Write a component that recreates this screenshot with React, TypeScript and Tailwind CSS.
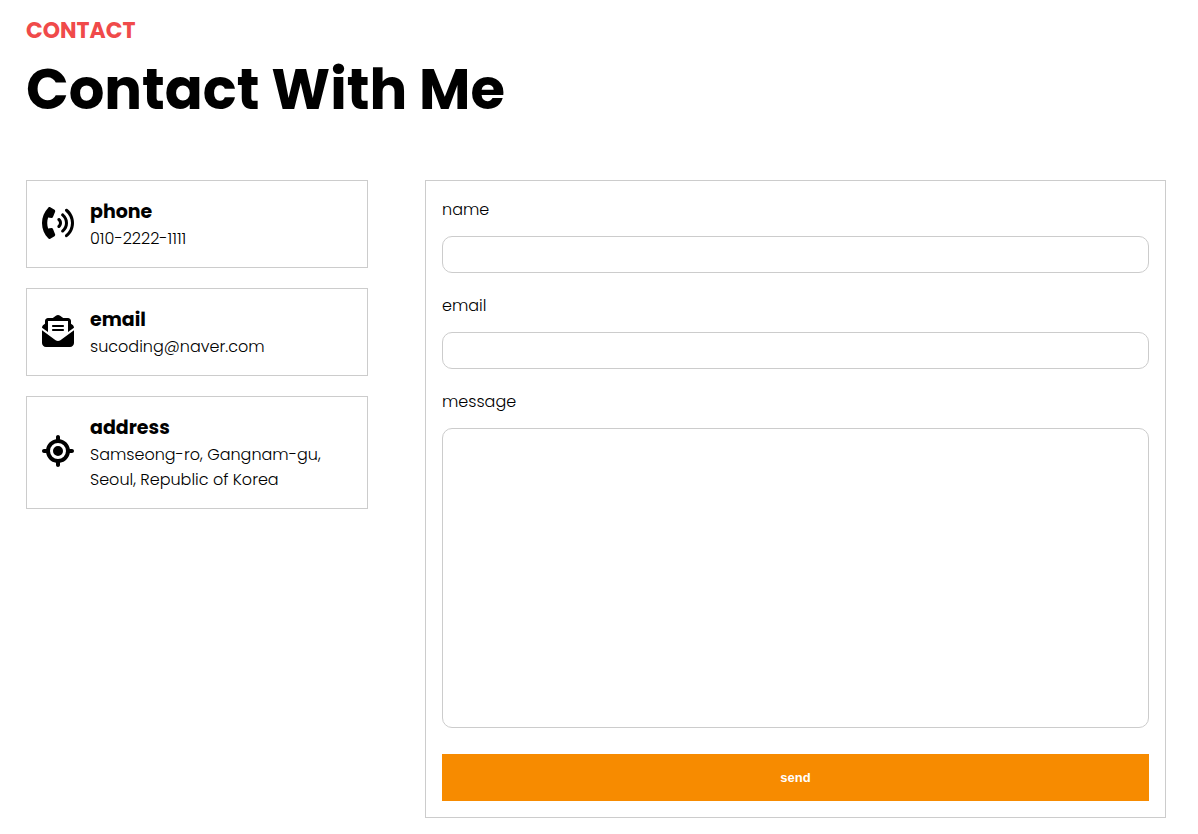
import type { ReactNode } from 'react';
import { FaEnvelopeOpenText, FaLocationCrosshairs } from 'react-icons/fa6';

type CardProps = { icon: ReactNode; title: string; lines: string[] };

function PhoneIcon() {
  return (
    <svg width="32" height="32" viewBox="0 0 512 512" fill="currentColor" aria-hidden="true">
      <path d="M284.6 181.9c-10.28-8.344-25.41-6.875-33.75 3.406C242.4 195.6 243.9 210.7 254.2 219.1c11.31 9.25 17.81 22.69 17.81 36.87c0 14.19-6.5 27.62-17.81 36.87c-10.28 8.406-11.78 23.53-3.375 33.78c4.719 5.812 11.62 8.812 18.56 8.812c5.344 0 10.75-1.781 15.19-5.406c22.53-18.44 35.44-45.4 35.44-74.05S307.1 200.4 284.6 181.9z" />
      <path d="M345.1 107.1c-10.22-8.344-25.34-6.907-33.78 3.343c-8.406 10.25-6.906 25.37 3.344 33.78c33.88 27.78 53.31 68.18 53.31 110.9s-19.44 83.09-53.31 110.9c-10.25 8.406-11.75 23.53-3.344 33.78c4.75 5.781 11.62 8.781 18.56 8.781c5.375 0 10.75-1.781 15.22-5.438C390.2 367.1 416 313.1 416 255.1S390.2 144.9 345.1 107.1z" />
      <path d="M406.4 33.15c-10.22-8.344-25.34-6.875-33.78 3.344c-8.406 10.25-6.906 25.37 3.344 33.78C431.9 116.1 464 183.8 464 255.1s-32.09 139.9-88.06 185.7c-10.25 8.406-11.75 23.53-3.344 33.78c4.75 5.781 11.62 8.781 18.56 8.781c5.375 0 10.75-1.781 15.22-5.438C473.5 423.8 512 342.6 512 255.1S473.5 88.15 406.4 33.15z" />
      <path d="M151.3 174.6C161.1 175.6 172.1 169.5 176 159.6l33.75-84.38C214 64.35 209.1 51.1 200.2 45.86l-67.47-42.17C123.2-2.289 110.9-.8945 102.9 7.08C-34.32 144.3-34.31 367.7 102.9 504.9c7.982 7.984 20.22 9.379 29.75 3.402l67.48-42.19c9.775-6.104 13.9-18.47 9.598-29.3L176 352.5c-3.945-9.963-14.14-16.11-24.73-14.97l-53.24 5.314C78.89 286.7 78.89 225.4 98.06 169.3L151.3 174.6z" />
    </svg>
  );
}

function ContactCard({ icon, title, lines }: CardProps) {
  return (
    <li className="flex items-center gap-4 border border-[#cccccc] px-[15px] py-4">
      <span className="shrink-0 pb-[3px]">{icon}</span>
      <div>
        <h3 className="text-[19px] leading-[29px] font-bold">{title}</h3>
        {lines.map((line) => (
          <p key={line} className="text-base leading-[25px] font-light">{line}</p>
        ))}
      </div>
    </li>
  );
}

const labelClass = 'block text-base leading-[25px] font-light';
const fieldClass = 'mt-[14px] block w-full rounded-[10px] border border-[#cccccc] bg-white px-3 outline-none';

export default function App() {
  return (
    <main className="bg-white px-[26px] pt-4 pb-4 pr-8 font-['Poppins','Inter',sans-serif] text-black">
      <p className="text-[22px] leading-[30px] font-bold text-[#f04a4a]">CONTACT</p>
      <h1 className="mt-[2px] text-[56px] leading-[84px] font-bold">Contact With Me</h1>
      <div className="mt-12 flex items-start justify-between gap-[5%]">
        <ul className="flex w-[30%] flex-col gap-5">
          <ContactCard icon={<PhoneIcon />} title="phone" lines={['010-2222-1111']} />
          <ContactCard icon={<FaEnvelopeOpenText size={32} />} title="email" lines={['sucoding@naver.com']} />
          <ContactCard
            icon={<FaLocationCrosshairs size={32} />}
            title="address"
            lines={['Samseong-ro, Gangnam-gu,', 'Seoul, Republic of Korea']}
          />
        </ul>
        <form className="w-[65%] border border-[#cccccc] p-4" onSubmit={(e) => e.preventDefault()}>
          <label htmlFor="name" className={labelClass}>name</label>
          <input id="name" type="text" className={`${fieldClass} mb-5 h-[37px]`} />
          <label htmlFor="email" className={labelClass}>email</label>
          <input id="email" type="email" className={`${fieldClass} mb-5 h-[37px]`} />
          <label htmlFor="message" className={labelClass}>message</label>
          <textarea id="message" className={`${fieldClass} h-[300px] resize-none py-2`} />
          <button type="submit" className="mt-[26px] block h-[47px] w-full bg-[#f78b00] font-['Liberation_Sans',sans-serif] text-[13px] font-bold text-white">
            send
          </button>
        </form>
      </div>
    </main>
  );
}
